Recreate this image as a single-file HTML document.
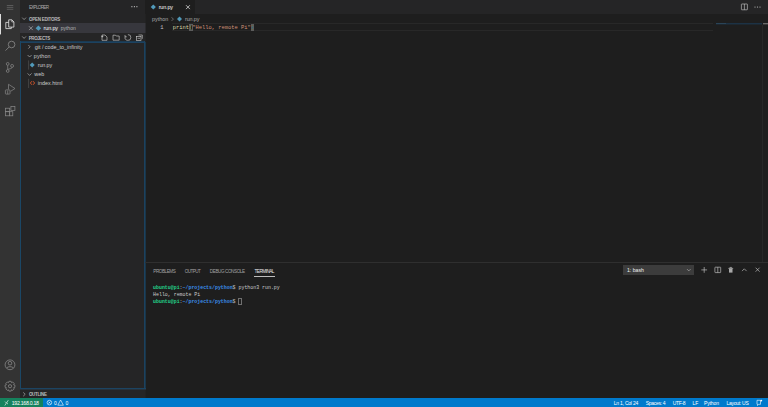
<!DOCTYPE html>
<html><head><meta charset="utf-8">
<style>
*{margin:0;padding:0;box-sizing:border-box}
html,body{width:768px;height:407px;overflow:hidden;background:#1e1e1e;font-family:"Liberation Sans",sans-serif;color:#cccccc}
.a{position:absolute;white-space:nowrap}
.t{position:absolute;white-space:nowrap;line-height:1}
.m{font-family:"Liberation Mono",monospace}
svg{position:absolute;overflow:visible}
</style></head><body>
<!-- activity bar -->
<div class="a" style="left:0;top:0;width:20px;height:398px;background:#333333"></div>
<div class="a" style="left:0;top:14px;width:1px;height:20px;background:#dedede"></div><div class="a" style="left:0;top:34px;width:1px;height:1px;background:#7a7a7a"></div>
<!-- hamburger -->
<svg style="left:0;top:0" width="20" height="14"><g stroke="#7a7a7a" stroke-width="0.55"><line x1="6.8" y1="5.5" x2="13.3" y2="5.5"/><line x1="6.8" y1="7.4" x2="13.3" y2="7.4"/><line x1="6.8" y1="9.3" x2="13.3" y2="9.3"/></g></svg>
<!-- explorer icon -->
<svg style="left:0;top:0" width="20" height="40"><g fill="none" stroke="#f0f0f0" stroke-width="0.75"><path d="M8.6 22.4 H5.8 V28.6 H11.3 V27.1"/><path d="M8.7 19.8 H11.8 L13.9 21.9 V27.1 H8.7 Z"/><path d="M11.8 19.8 V21.9 H13.9" stroke-width="0.6"/></g></svg>
<!-- search -->
<svg style="left:0;top:0" width="20" height="60"><g fill="none" stroke="#8c8c8c" stroke-width="0.8"><circle cx="11.6" cy="44.5" r="3.3"/><line x1="9.2" y1="46.9" x2="5.5" y2="50.6"/></g></svg>
<!-- scm -->
<svg style="left:0;top:0" width="20" height="80"><g fill="none" stroke="#8a8a8a" stroke-width="0.7"><circle cx="7.7" cy="63.9" r="1.4"/><circle cx="7.7" cy="71" r="1.4"/><circle cx="12.1" cy="65.9" r="1.45"/><line x1="7.7" y1="65.3" x2="7.7" y2="69.6"/><path d="M12.1 67.35 C12.1 69.2 8.4 68.5 7.8 69.6"/></g></svg>
<!-- debug -->
<svg style="left:0;top:0" width="20" height="100"><g fill="none" stroke="#8a8a8a" stroke-width="0.7"><path d="M8.5 89.3 V84.3 L15 88.5 L10.6 91.3"/><rect x="5.4" y="89.9" width="4.6" height="4.2" rx="0.7"/><line x1="7.7" y1="90.6" x2="7.7" y2="94.1"/></g></svg>
<!-- extensions -->
<svg style="left:0;top:0" width="20" height="120"><g fill="none" stroke="#8a8a8a" stroke-width="0.7"><rect x="5.4" y="108.2" width="4.3" height="3.5"/><rect x="5.4" y="111.7" width="4.3" height="4.1"/><rect x="9.7" y="111.7" width="3.1" height="4.1"/><rect x="10.9" y="106.4" width="4" height="4"/></g></svg>
<!-- account -->
<svg style="left:0;top:0" width="20" height="380"><g fill="none" stroke="#8c8c8c" stroke-width="0.75"><circle cx="10" cy="364.8" r="4.9"/><circle cx="10" cy="363.2" r="1.8"/><path d="M6.6 368.2 C7.5 366.2 12.5 366.2 13.4 368.2"/></g></svg>
<!-- gear -->
<svg style="left:0;top:0" width="20" height="400"><g fill="none" stroke="#8c8c8c" stroke-width="0.75"><circle cx="10" cy="386.2" r="1.6"/><path d="M8.9 381.3 H11.1 L11.5 382.6 L12.7 382 L14.2 383.5 L13.6 384.7 L14.9 385.1 V387.3 L13.6 387.7 L14.2 388.9 L12.7 390.4 L11.5 389.8 L11.1 391.1 H8.9 L8.5 389.8 L7.3 390.4 L5.8 388.9 L6.4 387.7 L5.1 387.3 V385.1 L6.4 384.7 L5.8 383.5 L7.3 382 L8.5 382.6 Z"/></g></svg>

<!-- sidebar -->
<div class="a" style="left:20px;top:0;width:125px;height:398px;background:#252526"></div>
<svg style="left:0;top:0" width="145" height="14"><g fill="#c5c5c5"><circle cx="131.9" cy="6.7" r="0.6"/><circle cx="134.4" cy="6.7" r="0.6"/><circle cx="136.9" cy="6.7" r="0.6"/></g></svg>
<!-- open editors header -->
<svg style="left:0;top:0" width="30" height="30"><path d="M22.2 17.6 L24.1 19.6 L26 17.6" fill="none" stroke="#c5c5c5" stroke-width="0.6"/></svg>
<div class="a" style="left:20px;top:23.3px;width:125px;height:9.3px;background:#37373d"></div>
<svg style="left:0;top:0" width="40" height="40"><g stroke="#c5c5c5" stroke-width="0.6"><line x1="29" y1="26.3" x2="32.8" y2="30.1"/><line x1="32.8" y1="26.3" x2="29" y2="30.1"/></g></svg>
<svg style="left:0;top:0" width="50" height="40"><path d="M38.4 25.6 L41.2 28.2 L38.4 30.8 L35.6 28.2 Z" fill="#519aba"/></svg>
<!-- projects header -->
<svg style="left:0;top:0" width="30" height="45"><path d="M22.2 36.4 L24.1 38.4 L26 36.4" fill="none" stroke="#c5c5c5" stroke-width="0.6"/></svg>
<svg style="left:0;top:0" width="150" height="45"><g fill="none" stroke="#d4d4d4" stroke-width="0.6">
<path d="M102 35 H105 L107 37 V40.3 H102 Z"/><path d="M101.3 36.5 H103.3 M102.3 35.5 V37.5"/>
<path d="M113 35.2 H115.5 L116.2 36 H119.2 V40.2 H113 Z"/>
<path d="M127.9 34.6 A2.9 2.9 0 1 1 125.2 36.6"/><path d="M125 35 V36.8 H126.8"/>
<path d="M138.5 35 H142.3 V38.8"/><rect x="136.6" y="36.3" width="4.4" height="4"/><line x1="137.6" y1="38.3" x2="140" y2="38.3"/>
</g></svg>
<!-- focus border -->
<div class="a" style="left:145px;top:0;width:1px;height:398px;background:#222222"></div>
<div class="a" style="left:145px;top:23.3px;width:1px;height:9.3px;background:#2b2b2e"></div>
<div class="a" style="left:20px;top:41px;width:125px;height:1px;background:#1b3a52"></div>
<div class="a" style="left:20px;top:42px;width:126px;height:1px;background:#1c4260"></div>
<div class="a" style="left:20px;top:41px;width:1px;height:348px;background:#1b4766"></div>
<div class="a" style="left:144px;top:41px;width:1px;height:348px;background:#1c4260"></div>
<div class="a" style="left:145px;top:42px;width:1px;height:347px;background:#1a3649"></div>
<div class="a" style="left:20px;top:388px;width:126px;height:1px;background:#1c4462"></div>
<div class="a" style="left:20px;top:389px;width:126px;height:1px;background:#26323c"></div>
<!-- tree -->
<svg style="left:0;top:0" width="40" height="90"><g fill="none" stroke="#c5c5c5" stroke-width="0.6"><path d="M28.3 45 L30.1 46.8 L28.3 48.6"/><path d="M27.6 55 L29.6 57 L31.6 55"/><path d="M27.6 73.4 L29.6 75.4 L31.6 73.4"/></g>
<g stroke="#585858" stroke-width="0.6"><line x1="28.6" y1="60.4" x2="28.6" y2="69.6"/><line x1="28.6" y1="78.8" x2="28.6" y2="88"/></g></svg>
<svg style="left:0;top:0" width="50" height="90"><path d="M32.2 62.6 L34.7 65.1 L32.2 67.6 L29.7 65.1 Z" fill="#519aba"/></svg>
<svg style="left:0;top:0" width="50" height="90"><g fill="none" stroke="#c9532b" stroke-width="1"><path d="M31.9 81.2 L30.4 83 L31.9 84.8"/><path d="M33.1 81.2 L34.6 83 L33.1 84.8"/></g></svg>
<!-- outline -->
<svg style="left:0;top:0" width="30" height="400"><path d="M23.2 392.4 L25.2 394.3 L23.2 396.2" fill="none" stroke="#c5c5c5" stroke-width="0.6"/></svg>

<!-- tab bar -->
<div class="a" style="left:145px;top:0;width:623px;height:14px;background:#252526"></div>
<div class="a" style="left:145px;top:0;width:50px;height:14px;background:#1e1e1e"></div>
<svg style="left:0;top:0" width="200" height="14"><path d="M153.3 4.6 L155.9 7.1 L153.3 9.6 L150.7 7.1 Z" fill="#519aba"/><g stroke="#e0e0e0" stroke-width="0.75"><line x1="186" y1="5.2" x2="189.9" y2="9.1"/><line x1="189.9" y1="5.2" x2="186" y2="9.1"/></g></svg>
<svg style="left:0;top:0" width="768" height="14"><g fill="none" stroke="#c5c5c5" stroke-width="0.65"><rect x="741.4" y="4" width="6" height="5.8" rx="0.4"/><line x1="744.4" y1="4" x2="744.4" y2="9.8"/></g><g fill="#c5c5c5"><circle cx="755" cy="7" r="0.6"/><circle cx="757.5" cy="7" r="0.6"/><circle cx="760" cy="7" r="0.6"/></g></svg>
<!-- breadcrumbs -->
<svg style="left:0;top:0" width="210" height="24"><path d="M171.6 17.3 L173.4 19.1 L171.6 20.9" fill="none" stroke="#a9a9a9" stroke-width="0.55"/><path d="M179.5 16.5 L182 19 L179.5 21.5 L177 19 Z" fill="#519aba"/></svg>
<!-- editor line -->
<div class="a" style="left:172.3px;top:23px;width:541px;height:8.4px;border-top:1px solid #282828;border-bottom:1px solid #282828"></div>
<div class="t m" style="left:160.2px;top:25.2px;font-size:5.41px;color:#c6c6c6">1</div>
<div class="t m" style="left:172.8px;top:25.2px;font-size:5.41px;color:#d4d4d4"><span style="color:#dcdcaa">print</span>(<span style="color:#ce9178">"Hello, remote Pi"</span>)</div>
<div class="a" style="left:189px;top:23.5px;width:3.8px;height:7.3px;border:0.6px solid #5c5c5c;background:rgba(0,100,0,0.08)"></div>
<div class="a" style="left:250.6px;top:23.5px;width:3.6px;height:7.3px;border:0.6px solid #5c5c5c;background:rgba(0,100,0,0.08)"></div>
<!-- minimap / scrollbar -->
<div class="a" style="left:715.7px;top:23px;width:46.5px;height:1px;background:#1c3245"></div>
<div class="a" style="left:715.7px;top:24px;width:46.5px;height:1px;background:#1d272f"></div>
<div class="a" style="left:716px;top:23px;width:10px;height:1px;background:#2a4458"></div>
<div class="a" style="left:762px;top:25px;width:1px;height:237px;background:#272727"></div>
<div class="a" style="left:763px;top:23px;width:5px;height:1px;background:#6a6a6a"></div>
<div class="a" style="left:763px;top:24px;width:5px;height:1px;background:#3a3a3a"></div>

<!-- panel -->
<div class="a" style="left:145px;top:262px;width:623px;height:1px;background:#2f2f2f"></div>
<div class="a" style="left:253.75px;top:275.8px;width:21.3px;height:0.8px;background:#bdbdbd"></div>
<div class="a" style="left:622.9px;top:265.2px;width:71.2px;height:9.7px;background:#3c3c3c"></div>
<svg style="left:0;top:0" width="768" height="280"><path d="M687 269.1 L688.8 270.9 L690.6 269.1" fill="none" stroke="#c5c5c5" stroke-width="0.55"/>
<g fill="none" stroke="#c5c5c5" stroke-width="0.65">
<line x1="704.2" y1="267" x2="704.2" y2="272.8"/><line x1="701.3" y1="269.9" x2="707.1" y2="269.9"/>
<rect x="714.9" y="267.2" width="5.8" height="5.4" rx="0.4"/><line x1="717.8" y1="267.2" x2="717.8" y2="272.6"/>
<path d="M728.3 268.4 H733.2 M729.9 268.4 V267.4 H731.6 V268.4"/><rect x="729" y="268.6" width="3.5" height="4" fill="#a9a9a9" stroke="none"/>
<path d="M742 271.1 L744.3 268.8 L746.6 271.1"/>
<line x1="755.6" y1="267.7" x2="759.6" y2="271.7"/><line x1="759.6" y1="267.7" x2="755.6" y2="271.7"/>
</g></svg>
<!-- terminal -->
<div class="t m" style="left:153.1px;top:285px;font-size:4.91px;line-height:6.9px;color:#cccccc"><b style="color:#23d18b">ubuntu@pi</b>:<b style="color:#3b8eea">~/projects/python</b>$ python3 run.py<br>Hello, remote Pi<br><b style="color:#23d18b">ubuntu@pi</b>:<b style="color:#3b8eea">~/projects/python</b>$ </div>
<div class="a" style="left:238.3px;top:298.3px;width:3.5px;height:6.8px;border:0.6px solid #6f6f6f"></div>

<!-- status bar -->
<div class="a" style="left:0;top:398px;width:768px;height:9px;background:#007acc"></div>
<div class="a" style="left:0;top:398px;width:42.7px;height:9px;background:#16825d"></div>
<svg style="left:0;top:0" width="80" height="407"><g fill="none" stroke="#ffffff" stroke-width="0.6"><path d="M4.8 405.5 L8.3 400.2"/><path d="M5 401.6 L6.3 402.9 M6.8 403 L8 404.2"/></g></svg>
<svg style="left:0;top:0" width="80" height="407"><g fill="none" stroke="#ffffff" stroke-width="0.6"><circle cx="49.4" cy="402.6" r="2.3"/><line x1="48.4" y1="401.6" x2="50.4" y2="403.6"/><line x1="50.4" y1="401.6" x2="48.4" y2="403.6"/><path d="M60.6 400 L63.4 405.2 H57.8 Z"/></g></svg>
<svg style="left:0;top:0" width="768" height="407"><g fill="none" stroke="#ffffff" stroke-width="0.6"><path d="M757 400.3 H760.5 V404.3 H758.5 L757.5 405.5 V404.3 H757 Z"/></g><circle cx="761.3" cy="400.6" r="0.9" fill="#ffffff"/></svg>
<div class="t" id="explorer" style="left:28.90px;top:5.70px;font-size:4.600px;color:#a8a8a8;letter-spacing:-0.703px;">EXPLORER</div>
<div class="t" id="openeditors" style="left:28.90px;top:17.70px;font-size:4.500px;color:#bbbbbb;font-weight:bold;letter-spacing:-0.229px;">OPEN EDITORS</div>
<div class="t" id="oe_runpy" style="left:43.60px;top:25.75px;font-size:5.400px;color:#ffffff;letter-spacing:-0.120px;">run.py</div>
<div class="t" id="oe_python" style="left:60.70px;top:26.25px;font-size:5.000px;color:#b4b4b4;">python</div>
<div class="t" id="projects" style="left:28.70px;top:36.70px;font-size:4.500px;color:#bbbbbb;font-weight:bold;letter-spacing:-0.394px;">PROJECTS</div>
<div class="t" id="git" style="left:34.70px;top:44.60px;font-size:5.400px;color:#cccccc;">git / code_to_infinity</div>
<div class="t" id="python" style="left:33.80px;top:54.20px;font-size:5.400px;color:#cccccc;letter-spacing:0.120px;">python</div>
<div class="t" id="runpy" style="left:37.80px;top:62.85px;font-size:5.400px;color:#cccccc;letter-spacing:-0.120px;">run.py</div>
<div class="t" id="web" style="left:34.30px;top:72.15px;font-size:5.400px;color:#cccccc;">web</div>
<div class="t" id="index" style="left:37.80px;top:81.05px;font-size:5.400px;color:#cccccc;">index.html</div>
<div class="t" id="outline" style="left:28.90px;top:392.50px;font-size:4.500px;color:#bbbbbb;font-weight:bold;letter-spacing:-0.280px;">OUTLINE</div>
<div class="t" id="tab_runpy" style="left:158.70px;top:5.30px;font-size:5.400px;color:#ffffff;letter-spacing:-0.120px;">run.py</div>
<div class="t" id="bc_python" style="left:152.00px;top:16.55px;font-size:5.400px;color:#a9a9a9;">python</div>
<div class="t" id="bc_runpy" style="left:185.00px;top:16.75px;font-size:5.400px;color:#a9a9a9;letter-spacing:-0.120px;">run.py</div>
<div class="t" id="problems" style="left:153.30px;top:269.55px;font-size:4.600px;color:#a0a0a0;letter-spacing:-0.429px;">PROBLEMS</div>
<div class="t" id="output" style="left:184.70px;top:269.55px;font-size:4.600px;color:#a0a0a0;letter-spacing:-0.540px;">OUTPUT</div>
<div class="t" id="debug" style="left:209.80px;top:269.55px;font-size:4.600px;color:#a0a0a0;letter-spacing:-0.400px;">DEBUG CONSOLE</div>
<div class="t" id="terminal" style="left:254.50px;top:269.55px;font-size:4.600px;color:#e7e7e7;letter-spacing:-0.471px;">TERMINAL</div>
<div class="t" id="bash" style="left:626.90px;top:268.10px;font-size:5.200px;color:#f0f0f0;">1: bash</div>
<div class="t" id="ip" style="left:11.75px;top:400.83px;font-size:5.200px;color:#ffffff;letter-spacing:-0.285px;">192.168.0.18</div>
<div class="t" id="err0" style="left:53.90px;top:400.70px;font-size:5.000px;color:#ffffff;">0</div>
<div class="t" id="warn0" style="left:65.60px;top:400.70px;font-size:5.000px;color:#ffffff;">0</div>
<div class="t" id="ln" style="left:613.70px;top:400.70px;font-size:5.000px;color:#ffffff;letter-spacing:-0.218px;">Ln 1, Col 24</div>
<div class="t" id="spaces" style="left:645.80px;top:400.70px;font-size:5.000px;color:#ffffff;letter-spacing:-0.300px;">Spaces: 4</div>
<div class="t" id="utf" style="left:672.70px;top:400.70px;font-size:5.000px;color:#ffffff;letter-spacing:-0.300px;">UTF-8</div>
<div class="t" id="lf" style="left:692.60px;top:400.70px;font-size:5.000px;color:#ffffff;letter-spacing:-0.100px;">LF</div>
<div class="t" id="pyth" style="left:704.00px;top:400.70px;font-size:5.000px;color:#ffffff;letter-spacing:-0.120px;">Python</div>
<div class="t" id="layout" style="left:726.40px;top:400.70px;font-size:5.000px;color:#ffffff;letter-spacing:-0.267px;">Layout: US</div>
</body></html>
